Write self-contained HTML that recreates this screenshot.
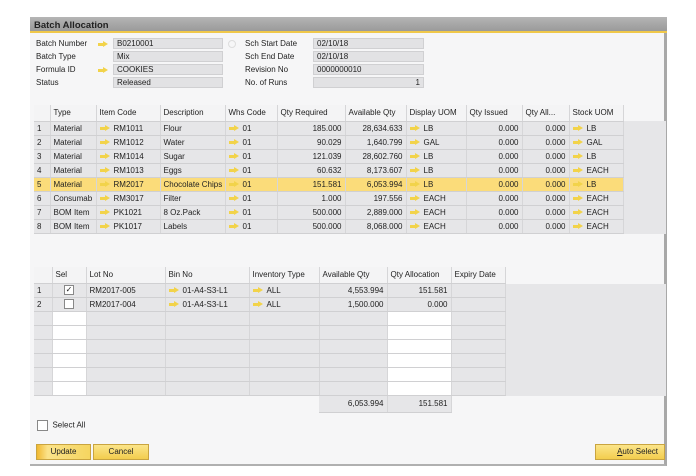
<!DOCTYPE html>
<html><head><meta charset="utf-8"><style>
*{margin:0;padding:0;box-sizing:border-box}
body{width:696px;height:476px;background:#fff;font-family:"Liberation Sans",sans-serif;font-size:8px;color:#222;position:relative;overflow:hidden}
.win{position:absolute;left:30px;top:17px;width:637px;height:449px;background:#f6f6f7;border-right:3px solid #a8a8a8;border-bottom:2px solid #b0b0b0}
.title{position:absolute;left:30px;top:17px;width:637px;height:16px;background:linear-gradient(#b5b5b5,#9a9a9a);border-bottom:2px solid #f0c84a;font-weight:bold;font-size:9.5px;padding:3px 4px;color:#222}
.a{position:absolute;white-space:nowrap}
.f{position:absolute;height:11px;background:#e2e2e4;border:1px solid #d0d0d2;padding:0 3px;line-height:9px}
.arr{position:absolute;width:10px;height:6px}
.arr:before{content:"";position:absolute;left:0;top:1.5px;width:6px;height:3px;background:#f2d34a}
.arr:after{content:"";position:absolute;left:5px;top:0;border-left:5px solid #f2d34a;border-top:3px solid transparent;border-bottom:3px solid transparent}
table{position:absolute;border-collapse:collapse;table-layout:fixed}
td{height:14px;border-right:1px solid #d6d6d8;border-bottom:1px solid #d0d0d2;padding:0 3px;white-space:nowrap;overflow:hidden;background:#e6e6e8;position:relative}
tr.h td{background:#f4f4f5;height:16px;border-bottom:1px solid #d0d0d2}
td.r{text-align:right}
tr.sel td{background:#fbdc7a}
td.w{background:#fff}
td .arr{position:relative;display:inline-block;top:0;margin-right:4px;vertical-align:middle}
.btn{position:absolute;height:16px;background:linear-gradient(#fbe58a,#f3cd4e);border:1px solid #c9a440;text-align:center;line-height:14px;font-size:8px}
.cb{display:inline-block;width:10px;height:10px;border:1px solid #888;background:#fff;vertical-align:middle;text-align:center;line-height:8px;font-size:8px}
</style></head><body>
<div class="win"></div>
<div class="title">Batch Allocation</div>

<div class="a" style="left:36px;top:39px">Batch Number</div>
<div class="a" style="left:36px;top:52px">Batch Type</div>
<div class="a" style="left:36px;top:65px">Formula ID</div>
<div class="a" style="left:36px;top:78px">Status</div>
<div class="arr" style="left:98px;top:41px"></div>
<div class="arr" style="left:98px;top:67px"></div>
<div class="f" style="left:113px;top:38px;width:110px">B0210001</div>
<div class="f" style="left:113px;top:51px;width:110px">Mix</div>
<div class="f" style="left:113px;top:64px;width:110px">COOKIES</div>
<div class="f" style="left:113px;top:77px;width:110px">Released</div>
<div class="a" style="left:228px;top:40px;width:8px;height:8px;border-radius:50%;border:1px solid #ddd"></div>
<div class="a" style="left:245px;top:39px">Sch Start Date</div>
<div class="a" style="left:245px;top:52px">Sch End Date</div>
<div class="a" style="left:245px;top:65px">Revision No</div>
<div class="a" style="left:245px;top:78px">No. of Runs</div>
<div class="f" style="left:313px;top:38px;width:111px">02/10/18</div>
<div class="f" style="left:313px;top:51px;width:111px">02/10/18</div>
<div class="f" style="left:313px;top:64px;width:111px">0000000010</div>
<div class="f" style="left:313px;top:77px;width:111px;text-align:right">1</div>

<div class="a" style="left:34px;top:121px;width:632px;height:113px;background:#e6e6e8"></div>
<table style="left:34px;top:105px;width:589px">
<colgroup><col style="width:16px"><col style="width:46px"><col style="width:64px"><col style="width:65px"><col style="width:52px"><col style="width:68px"><col style="width:61px"><col style="width:60px"><col style="width:56px"><col style="width:47px"><col style="width:54px"></colgroup>
<tr class="h"><td></td><td>Type</td><td>Item Code</td><td>Description</td><td>Whs Code</td><td>Qty Required</td><td>Available Qty</td><td>Display UOM</td><td>Qty Issued</td><td>Qty All...</td><td>Stock UOM</td></tr>
<tr><td>1</td><td>Material</td><td><span class="arr"></span>RM1011</td><td>Flour</td><td><span class="arr"></span>01</td><td class="r">185.000</td><td class="r">28,634.633</td><td><span class="arr"></span>LB</td><td class="r">0.000</td><td class="r">0.000</td><td><span class="arr"></span>LB</td></tr>
<tr><td>2</td><td>Material</td><td><span class="arr"></span>RM1012</td><td>Water</td><td><span class="arr"></span>01</td><td class="r">90.029</td><td class="r">1,640.799</td><td><span class="arr"></span>GAL</td><td class="r">0.000</td><td class="r">0.000</td><td><span class="arr"></span>GAL</td></tr>
<tr><td>3</td><td>Material</td><td><span class="arr"></span>RM1014</td><td>Sugar</td><td><span class="arr"></span>01</td><td class="r">121.039</td><td class="r">28,602.760</td><td><span class="arr"></span>LB</td><td class="r">0.000</td><td class="r">0.000</td><td><span class="arr"></span>LB</td></tr>
<tr><td>4</td><td>Material</td><td><span class="arr"></span>RM1013</td><td>Eggs</td><td><span class="arr"></span>01</td><td class="r">60.632</td><td class="r">8,173.607</td><td><span class="arr"></span>LB</td><td class="r">0.000</td><td class="r">0.000</td><td><span class="arr"></span>EACH</td></tr>
<tr class="sel"><td>5</td><td>Material</td><td><span class="arr"></span>RM2017</td><td>Chocolate Chips</td><td><span class="arr"></span>01</td><td class="r">151.581</td><td class="r">6,053.994</td><td><span class="arr"></span>LB</td><td class="r">0.000</td><td class="r">0.000</td><td><span class="arr"></span>LB</td></tr>
<tr><td>6</td><td>Consumab</td><td><span class="arr"></span>RM3017</td><td>Filter</td><td><span class="arr"></span>01</td><td class="r">1.000</td><td class="r">197.556</td><td><span class="arr"></span>EACH</td><td class="r">0.000</td><td class="r">0.000</td><td><span class="arr"></span>EACH</td></tr>
<tr><td>7</td><td>BOM Item</td><td><span class="arr"></span>PK1021</td><td>8 Oz.Pack</td><td><span class="arr"></span>01</td><td class="r">500.000</td><td class="r">2,889.000</td><td><span class="arr"></span>EACH</td><td class="r">0.000</td><td class="r">0.000</td><td><span class="arr"></span>EACH</td></tr>
<tr><td>8</td><td>BOM Item</td><td><span class="arr"></span>PK1017</td><td>Labels</td><td><span class="arr"></span>01</td><td class="r">500.000</td><td class="r">8,068.000</td><td><span class="arr"></span>EACH</td><td class="r">0.000</td><td class="r">0.000</td><td><span class="arr"></span>EACH</td></tr>
</table>

<div class="a" style="left:34px;top:284px;width:632px;height:112px;background:#e6e6e8"></div>
<table style="left:34px;top:267px;width:471px">
<colgroup><col style="width:18px"><col style="width:34px"><col style="width:79px"><col style="width:84px"><col style="width:70px"><col style="width:68px"><col style="width:64px"><col style="width:54px"></colgroup>
<tr class="h"><td></td><td>Sel</td><td>Lot No</td><td>Bin No</td><td>Inventory Type</td><td>Available Qty</td><td>Qty Allocation</td><td>Expiry Date</td></tr>
<tr><td>1</td><td style="text-align:center"><span class="cb">✓</span></td><td>RM2017-005</td><td><span class="arr"></span>01-A4-S3-L1</td><td><span class="arr"></span>ALL</td><td class="r">4,553.994</td><td class="r">151.581</td><td></td></tr>
<tr><td>2</td><td style="text-align:center"><span class="cb"></span></td><td>RM2017-004</td><td><span class="arr"></span>01-A4-S3-L1</td><td><span class="arr"></span>ALL</td><td class="r">1,500.000</td><td class="r">0.000</td><td></td></tr>
<tr><td></td><td class="w"></td><td></td><td></td><td></td><td></td><td class="w"></td><td></td></tr>
<tr><td></td><td class="w"></td><td></td><td></td><td></td><td></td><td class="w"></td><td></td></tr>
<tr><td></td><td class="w"></td><td></td><td></td><td></td><td></td><td class="w"></td><td></td></tr>
<tr><td></td><td class="w"></td><td></td><td></td><td></td><td></td><td class="w"></td><td></td></tr>
<tr><td></td><td class="w"></td><td></td><td></td><td></td><td></td><td class="w"></td><td></td></tr>
<tr><td></td><td class="w"></td><td></td><td></td><td></td><td></td><td class="w"></td><td></td></tr>
</table>
<table style="left:319px;top:396px;width:132px">
<colgroup><col style="width:68px"><col style="width:64px"></colgroup>
<tr><td class="r" style="height:16px">6,053.994</td><td class="r">151.581</td></tr>
</table>

<div class="a" style="left:37px;top:420px"><span class="cb" style="width:11px;height:11px"></span>&nbsp; Select All</div>
<div class="btn" style="left:36px;top:444px;width:55px;background:linear-gradient(90deg,#f0b830,#fbe38a 20%,#f5d560)">Update</div>
<div class="btn" style="left:93px;top:444px;width:56px">Cancel</div>
<div class="btn" style="left:595px;top:444px;width:70px;text-align:right;padding-right:6px"><u>A</u>uto Select</div>
</body></html>
